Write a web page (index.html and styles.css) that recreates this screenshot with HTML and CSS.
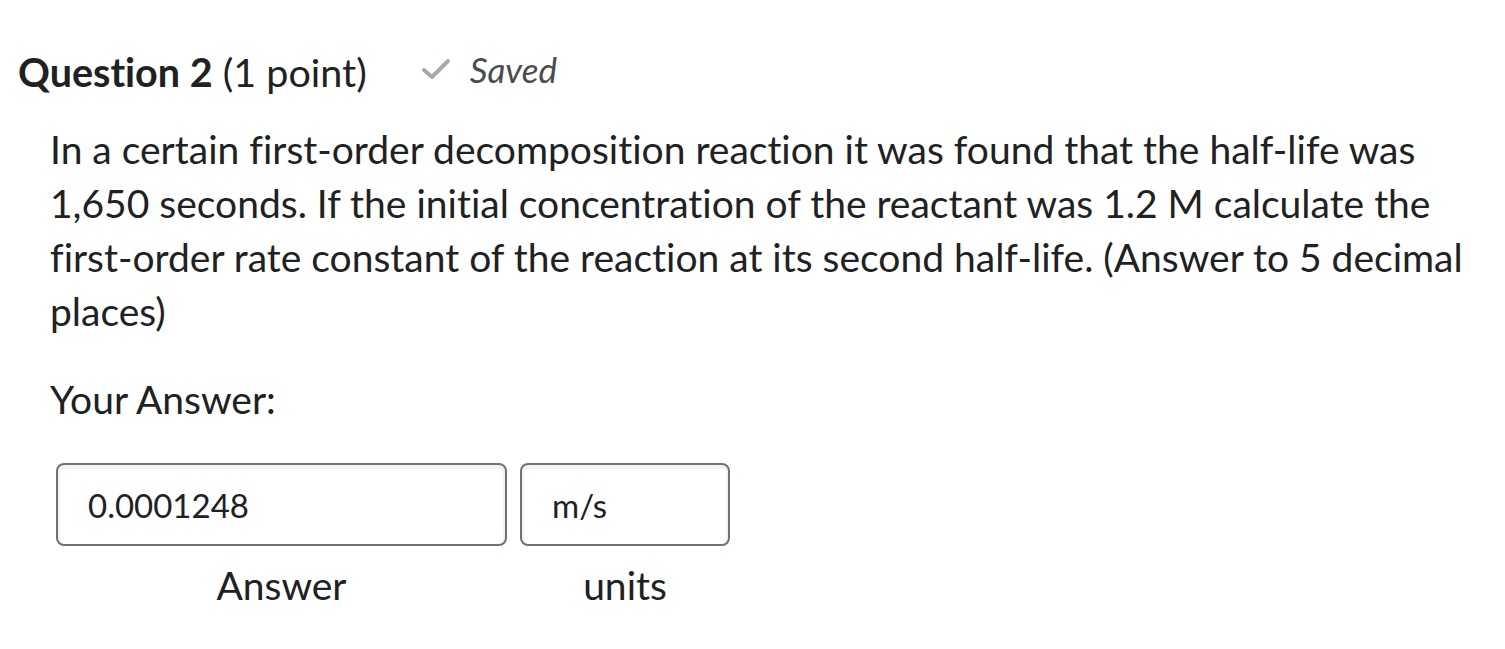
FILE: index.html
```html
<!DOCTYPE html>
<html>
<head>
<meta charset="utf-8">
<link rel="stylesheet" href="styles.css">
</head>
<body>
<div class="question">
  <div class="q-header">
    <h2 class="q-title"><strong>Question 2</strong> (1 point)</h2>
    <div class="saved">
      <svg class="check" viewBox="0 0 30 24" width="30" height="24" aria-hidden="true">
        <path d="M3 13 L11 20 L27 4" fill="none" stroke="#a7abaf" stroke-width="4" stroke-linecap="round" stroke-linejoin="round"/>
      </svg>
      <span class="saved-text">Saved</span>
    </div>
  </div>
  <div class="q-body">
    <p class="q-text">In a certain first-order decomposition reaction it was found that the half-life was 1,650 seconds. If the initial concentration of the reactant was 1.2 M calculate the first-order rate constant of the reaction at its second half-life. (Answer to 5 decimal places)</p>
    <p class="your-answer">Your Answer:</p>
    <div class="answer-row">
      <div class="field field-answer">
        <div class="box">0.0001248</div>
        <div class="label">Answer</div>
      </div>
      <div class="field field-units">
        <div class="box">m/s</div>
        <div class="label">units</div>
      </div>
    </div>
  </div>
</div>
</body>
</html>
```
FILE: styles.css
```css
html, body {
  margin: 0;
  padding: 0;
  background: #ffffff;
}
body {
  font-family: Lato, "Noto Sans", sans-serif;
  color: #202122;
  font-variant-ligatures: none;
  font-feature-settings: "liga" 0, "clig" 0;
}
.question {
  padding: 50px 0 0 18px;
}
.q-header {
  display: flex;
  align-items: center;
  gap: 54px;
  height: 44px;
}
.q-title {
  margin: 0;
  font-size: 39.5px;
  font-weight: 400;
  line-height: 44px;
  color: #202122;
}
.q-title strong {
  font-weight: 700;
}
.saved {
  display: flex;
  align-items: center;
  gap: 19px;
  margin-top: -6px;
}
.check {
  display: block;
}
.saved-text {
  font-style: italic;
  font-size: 35px;
  color: #494c4e;
}
.q-body {
  padding-left: 32px;
}
.q-text {
  margin: 28px 0 0;
  font-size: 39px;
  line-height: 54px;
  max-width: 1430px;
}
.your-answer {
  margin: 34px 0 0;
  font-size: 39px;
  line-height: 54px;
}
.answer-row {
  display: flex;
  gap: 13px;
  margin-top: 37px;
  padding-left: 6px;
}
.field {
  display: flex;
  flex-direction: column;
}
.field-answer { width: 451px; }
.field-units { width: 210px; }
.box {
  box-sizing: border-box;
  height: 83px;
  border: 2px solid #6e7376;
  border-radius: 8px;
  box-shadow: inset 0 2px 0 2px #f1f2f3;
  display: flex;
  align-items: center;
  padding-left: 30px;
  font-size: 33px;
  color: #202122;
}
.label {
  text-align: center;
  font-size: 39px;
  margin-top: 19px;
  line-height: 40px;
}
```
